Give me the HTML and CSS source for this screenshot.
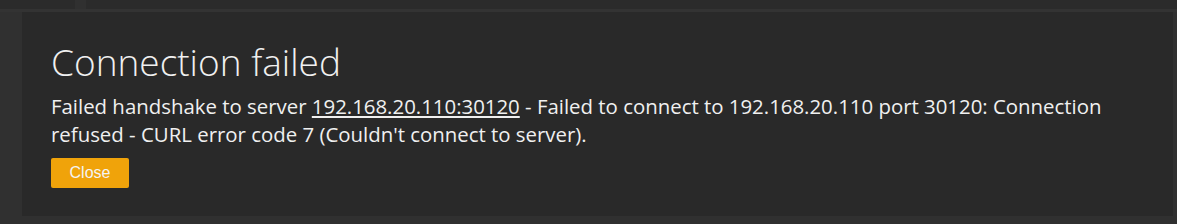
FILE: index.html
```html
<!DOCTYPE html>
<html lang="en">
<head>
    <meta charset="UTF-8">
    <meta name="viewport" content="width=device-width, initial-scale=1.0">
    <title>Connection failed</title>
    <link rel="stylesheet" href="styles.css">
</head>
<body>
    <div class="topbar">
        <div class="tab tab-left"></div>
        <div class="tab tab-gap"></div>
        <div class="tab tab-main"></div>
    </div>
    <div class="modal">
        <h1>Connection failed</h1>
        <p class="message">Failed handshake to server <a href="#">192.168.20.110:30120</a> - Failed to connect to 192.168.20.110 port 30120: Connection refused - CURL error code 7 (Couldn't connect to server).</p>
        <button class="close-btn">Close</button>
    </div>
</body>
</html>
```

FILE: styles.css
```css
html, body {
    height: 100%;
}
body {
    margin: 0;
    padding: 0;
    background-color: #303030;
    color: #eeeeee;
    font-family: "Open Sans", "Noto Sans", sans-serif;
    overflow: hidden;
}
.topbar {
    display: flex;
    height: 9px;
    border-bottom: 3px solid #333333;
}
.tab-left {
    width: 75px;
    background-color: #2b2b2b;
}
.tab-gap {
    width: 11px;
    background-color: #303030;
}
.tab-main {
    flex: 1;
    background-color: #2b2b2b;
}
.modal {
    margin: 0 4px 0 22px;
    height: 204px;
    box-sizing: border-box;
    background-color: #292929;
    padding: 28px 29px 0 29px;
}
h1 {
    margin: 0;
    font-weight: 300;
    font-size: 37px;
    line-height: 44px;
    color: #f0f0f0;
}
.message {
    margin: 8px 0 0 0;
    font-size: 20.4px;
    line-height: 28px;
    color: #f0f0f0;
    max-width: 1070px;
}
.message a {
    color: #f0f0f0;
    text-decoration: underline;
}
.close-btn {
    margin-top: 10px;
    width: 78px;
    height: 30px;
    background-color: #f0a30a;
    color: #f4f4f4;
    border: none;
    border-radius: 2px;
    font-family: "Liberation Sans", Arial, sans-serif;
    font-size: 16px;
    padding: 0;
    cursor: pointer;
}
```
